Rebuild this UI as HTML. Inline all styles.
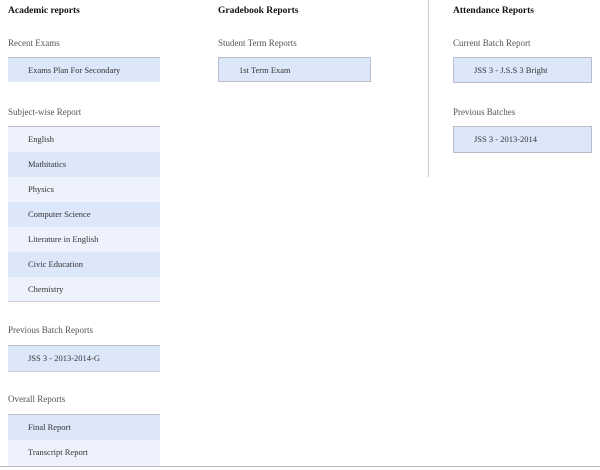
<!DOCTYPE html>
<html><head><style>
body{margin:0;width:600px;height:470px;background:#fff;font-family:"Liberation Serif",serif;font-size:9px;color:#222;position:relative;overflow:hidden}
.a{position:absolute;white-space:nowrap}
.h{font-weight:bold;font-size:9.5px;color:#111}
.s{color:#555;font-size:9px}
.r{position:absolute;height:25px;line-height:25px;padding-left:20px;box-sizing:border-box;font-size:8.5px;color:#333}
.d{background:#dde7fa}.l{background:#eef2fc}
</style></head><body>
<div class="a h" style="left:8px;top:6px">Academic reports</div>
<div class="a h" style="left:218px;top:6px">Gradebook Reports</div>
<div class="a h" style="left:453px;top:6px">Attendance Reports</div>
<div class="a s" style="left:8px;top:38px">Recent Exams</div>
<div class="a s" style="left:218px;top:38px">Student Term Reports</div>
<div class="a s" style="left:453px;top:38px">Current Batch Report</div>
<div class="a s" style="left:453px;top:107px">Previous Batches</div>
<div class="a s" style="left:8px;top:107px">Subject-wise Report</div>
<div class="a s" style="left:8px;top:325px">Previous Batch Reports</div>
<div class="a s" style="left:8px;top:394px">Overall Reports</div>
<div style="position:absolute;left:428px;top:0;width:1px;height:177px;background:#ccc"></div>
<div style="position:absolute;left:0;top:466px;width:600px;height:1px;background:#bbb"></div>

<div class="r d" style="left:8px;top:57px;width:152px;border-top:1px solid #bbc;border-bottom:1px solid #e4e8f0">Exams Plan For Secondary</div>
<div class="r d" style="left:218px;top:57px;width:153px;border:1px solid #bbc">1st Term Exam</div>
<div class="r d" style="left:453px;top:57px;width:139px;height:26px;border:1px solid #bbc">JSS 3 - J.S.S 3 Bright</div>
<div class="r d" style="left:453px;top:126px;width:139px;height:27px;border:1px solid #bbc">JSS 3 - 2013-2014</div>

<div style="position:absolute;left:8px;top:126px;width:152px;height:1px;background:#bbc"></div>
<div class="r l" style="left:8px;top:127px;width:152px">English</div>
<div class="r d" style="left:8px;top:152px;width:152px">Mathitatics</div>
<div class="r l" style="left:8px;top:177px;width:152px">Physics</div>
<div class="r d" style="left:8px;top:202px;width:152px">Computer Science</div>
<div class="r l" style="left:8px;top:227px;width:152px">Literature in English</div>
<div class="r d" style="left:8px;top:252px;width:152px">Civic Education</div>
<div class="r l" style="left:8px;top:277px;width:152px">Chemistry</div>
<div style="position:absolute;left:8px;top:301px;width:152px;height:1px;background:#ccd"></div>

<div class="r d" style="left:8px;top:345px;width:152px;height:27px;border-top:1px solid #bbc;border-bottom:1px solid #ccd">JSS 3 - 2013-2014-G</div>

<div style="position:absolute;left:8px;top:414px;width:152px;height:1px;background:#bbc"></div>
<div class="r d" style="left:8px;top:415px;width:152px">Final Report</div>
<div class="r l" style="left:8px;top:440px;width:152px;height:26px">Transcript Report</div>
</body></html>
